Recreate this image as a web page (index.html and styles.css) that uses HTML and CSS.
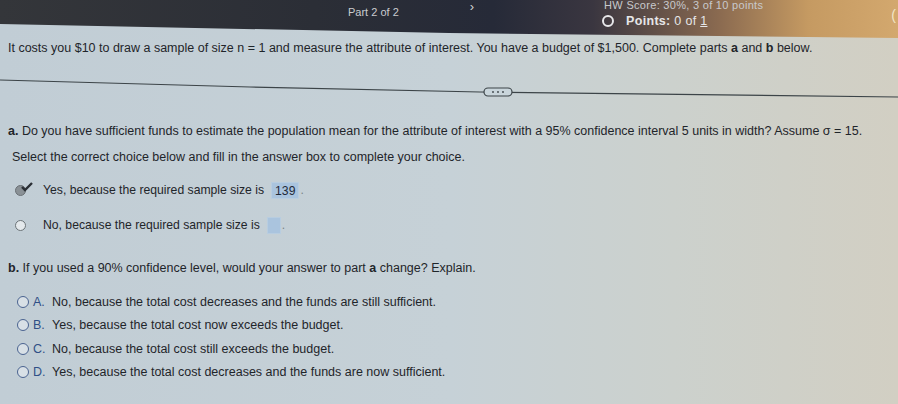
FILE: index.html
```html
<!DOCTYPE html>
<html>
<head>
<meta charset="utf-8">
<link rel="stylesheet" href="styles.css">
</head>
<body>
<div class="page">
  <header class="topbar">
    <div class="part">Part 2 of 2</div>
    <div class="chev">&#8250;</div>
    <div class="scores">
      <div class="hw">HW Score: 30%, 3 of 10 points</div>
      <div class="pts"><span class="ring"></span><span><b>Points:</b> 0 of <u>1</u></span></div>
    </div>
    <div class="edge">(</div>
  </header>
  <main class="content">
    <p class="intro">It costs you $10 to draw a sample of size <span class="math">n = 1</span> and measure the attribute of interest. You have a budget of $1,500. Complete parts <b>a</b> and <b>b</b> below.</p>
    <svg class="divider" width="898" height="26" viewBox="0 0 898 26">
      <polyline points="0,4 250,11 480,16 898,21" fill="none" stroke="#3c4448" stroke-width="1.2"/>
      <rect x="484" y="12" width="28" height="8" rx="4" fill="#c9d5db" stroke="#3c4448" stroke-width="1.2"/>
      <circle cx="493" cy="16" r="0.9" fill="#3c4448"/>
      <circle cx="498" cy="16" r="0.9" fill="#3c4448"/>
      <circle cx="503" cy="16" r="0.9" fill="#3c4448"/>
    </svg>
    <p class="qa"><b>a.</b> Do you have sufficient funds to estimate the population mean for the attribute of interest with a 95% confidence interval 5 units in width? Assume <span class="math">&sigma; = 15</span>.</p>
    <p class="select">Select the correct choice below and fill in the answer box to complete your choice.</p>
    <div class="choices">
      <div class="choice">
        <span class="radio checked"><svg width="16" height="12" viewBox="0 0 16 12"><path d="M4 6 L7 9 L14 2" fill="none" stroke="#2a2f35" stroke-width="2.4"/></svg></span>
        <span>Yes, because the required sample size is</span><span class="box">139</span><span class="dot">.</span>
      </div>
      <div class="choice second">
        <span class="radio"></span>
        <span>No, because the required sample size is</span><span class="box empty"></span><span class="dot">.</span>
      </div>
    </div>
    <p class="qb"><b>b.</b> If you used a 90% confidence level, would your answer to part <b>a</b> change? Explain.</p>
    <div class="mc">
      <div class="opt"><span class="radio blue"></span><span class="letter">A.</span><span>No, because the total cost decreases and the funds are still sufficient.</span></div>
      <div class="opt"><span class="radio blue"></span><span class="letter">B.</span><span>Yes, because the total cost now exceeds the budget.</span></div>
      <div class="opt"><span class="radio blue"></span><span class="letter">C.</span><span>No, because the total cost still exceeds the budget.</span></div>
      <div class="opt"><span class="radio blue"></span><span class="letter">D.</span><span>Yes, because the total cost decreases and the funds are now sufficient.</span></div>
    </div>
  </main>
</div>
</body>
</html>
```

FILE: styles.css
```css
* { box-sizing: border-box; }
html, body { margin: 0; padding: 0; }
body {
  width: 898px;
  height: 404px;
  overflow: hidden;
  font-family: "Liberation Sans", Arial, sans-serif;
  color: #1f252a;
  background: linear-gradient(90deg, #c1cdd5 0%, #c6d1d7 50%, #ccd1cd 75%, #d2cfc3 100%);
}
.page { position: relative; width: 898px; height: 404px; }
.topbar {
  height: 38px;
  display: flex;
  align-items: flex-start;
  padding-left: 348px;
  color: #d9dadc;
  background: linear-gradient(90deg, #34363a 0%, #2b2e36 35%, #262a38 55%, #3a3640 66%, #8a6a50 80%, #c59a62 90%, #d3a86e 100%);
  clip-path: polygon(0 0, 100% 0, 100% 100%, 50% 87%, 0 63%);
}
.part { font-size: 11px; margin-top: 6px; color: #c9cbcf; }
.chev { font-size: 13px; margin-left: 71px; margin-top: -1px; color: #d0d0d0; }
.scores { margin-left: 128px; display: flex; flex-direction: column; }
.hw { font-size: 11px; margin-top: 0; margin-left: 2px; color: #c8c9cc; letter-spacing: 0.3px; line-height: 11px; }
.pts { font-size: 12.5px; margin-top: 3px; display: flex; align-items: center; color: #e6e6e8; letter-spacing: 0.3px; }
.pts b { font-weight: bold; }
.ring { width: 12px; height: 12px; border: 2px solid #e8e8ea; border-radius: 50%; margin-right: 12px; }
.edge { margin-left: auto; margin-right: 2px; margin-top: 7px; font-size: 14px; color: #f3e6c8; }

.content { margin-top: 1px; font-size: 12.5px; }
p { margin: 0; }
.intro { margin-left: 8px; margin-top: 2px; line-height: 16px; }
.divider { display: block; margin-top: 20px; }
.qa { margin-left: 8px; margin-top: 21px; line-height: 16px; }
.select { margin-left: 12px; margin-top: 10px; line-height: 16px; }
.choices { margin-top: 16px; font-size: 12.2px; }
.choice { display: flex; align-items: center; height: 18px; margin-left: 15px; }
.choice.second { margin-top: 17px; }
.radio {
  width: 11px; height: 11px; border-radius: 50%;
  border: 1px solid #6c7478; background: #e4e9ec;
  margin-right: 17px; flex: none; position: relative;
}
.radio.checked { background: #8a9196; border-color: #6a7075; }
.radio.checked svg { position: absolute; left: 2px; top: -5px; }
.box {
  margin-left: 7px; padding: 0 3px; height: 17px; line-height: 17px;
  background: #aac4de; color: #1f2a38; border: 1px solid #b8cde0;
}
.box.empty { width: 14px; height: 17px; }
.dot { margin-left: 1px; color: #7c8588; }
.qb { margin-left: 8px; margin-top: 26px; line-height: 16px; }
.mc { margin-top: 17px; display: flex; flex-direction: column; gap: 6.5px; }
.opt { display: flex; align-items: center; height: 17px; margin-left: 17px; }
.radio.blue { width: 12px; height: 12px; border: 1.5px solid #4a6390; background: #d8e0e6; margin-right: 4px; }
.letter { color: #2f4f86; width: 19px; }
```
